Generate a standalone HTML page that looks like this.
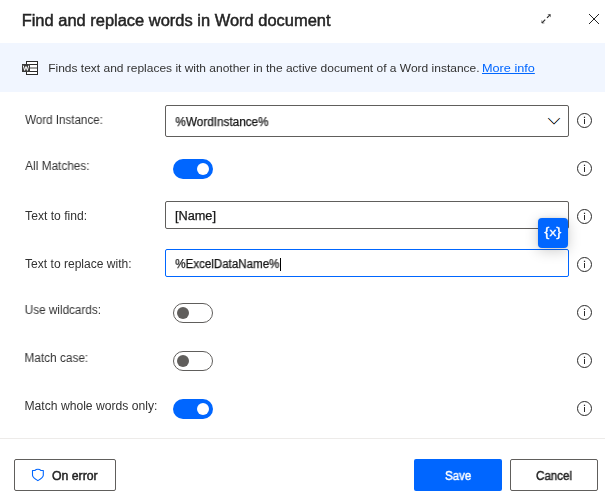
<!DOCTYPE html>
<html><head><meta charset="utf-8">
<style>
*{box-sizing:border-box;margin:0;padding:0}
html,body{width:605px;height:500px;background:#fff;overflow:hidden}
body{font-family:"Liberation Sans",sans-serif;color:#242424;position:relative}
.abs{position:absolute}
.t{position:absolute;height:0;line-height:0;white-space:nowrap;will-change:transform}
.t span{display:inline-block;line-height:0;vertical-align:baseline;transform-origin:0 50%}
.banner{left:0;top:43px;width:605px;height:49px;background:#f1f6ff}
.inp{left:165px;width:404px;border:1px solid #605e5c;border-radius:2px;background:#fff}
.tog{left:173px;width:40px;height:20px;border-radius:10px}
.tog.on{background:#0066ff}
.tog.on i{position:absolute;left:24px;top:4px;width:12px;height:12px;border-radius:6px;background:#fff}
.tog.off{border:1px solid #605e5c;background:#fff}
.tog.off i{position:absolute;left:3px;top:3px;width:12px;height:12px;border-radius:6px;background:#605e5c}
.btn{top:459px;height:32px;border-radius:2px}
svg{position:absolute;overflow:visible}
</style></head><body>
<div class="abs banner"></div>

<div class="abs inp" style="top:105px;height:32px"></div>
<div class="abs tog on" style="top:159px"><i></i></div>
<div class="abs inp" style="top:201px;height:28px"></div>
<div class="abs inp" style="top:249px;height:28px;border-color:#0066ff"></div>
<div class="abs tog off" style="top:303px"><i></i></div>
<div class="abs tog off" style="top:351px"><i></i></div>
<div class="abs tog on" style="top:399px"><i></i></div>

<div class="abs" style="left:538px;top:218px;width:30px;height:30px;border-radius:4px;background:#0066ff;box-shadow:0 3px 14px rgba(0,0,0,.2),0 0 3px rgba(0,0,0,.12)"></div>

<div class="abs" style="left:0;top:438px;width:605px;height:1px;background:#edebe9"></div>
<div class="abs btn" style="left:14px;width:102px;border:1px solid #605e5c"></div>
<div class="abs btn" style="left:414px;width:88px;background:#0066ff"></div>
<div class="abs btn" style="left:510px;width:88px;border:1px solid #605e5c"></div>

<!-- word icon -->
<svg style="left:21px;top:60px" width="18" height="16" viewBox="21 60 18 16">
 <rect x="26.5" y="61.5" width="11" height="13" fill="#fff" stroke="#2b2b2b" stroke-width="1"/>
 <line x1="27" y1="64.5" x2="37" y2="64.5" stroke="#2b2b2b" stroke-width="1"/>
 <line x1="29" y1="68" x2="37" y2="68" stroke="#8a8a8a" stroke-width="1.6"/>
 <line x1="27" y1="71.5" x2="37" y2="71.5" stroke="#2b2b2b" stroke-width="1"/>
 <rect x="22" y="64" width="8" height="8" fill="#3a3a3a"/>
 <path d="M23.3 65.6 L24.6 70.4 L26 66.4 L27.4 70.4 L28.7 65.6" fill="none" stroke="#fff" stroke-width="1"/>
</svg>
<!-- expand -->
<svg style="left:540px;top:13px" width="12" height="12" viewBox="540 13 12 12">
 <g fill="none" stroke="#2a2a2a" stroke-width="1">
 <path d="M547.8 14.5 H550.4 V17.1" opacity=".55"/><path d="M550.2 14.7 L547 17.9" stroke-width="1.2"/>
 <path d="M544.4 23 H541.8 V20.4" opacity=".55"/><path d="M542 22.8 L545.2 19.6" stroke-width="1.2"/>
 </g>
</svg>
<!-- close -->
<svg style="left:588px;top:13px" width="12" height="12" viewBox="588 13 12 12">
 <path d="M589 14 L599 24 M599 14 L589 24" fill="none" stroke="#242424" stroke-width="1"/>
</svg>
<!-- chevron -->
<svg style="left:547px;top:116px" width="14" height="10" viewBox="547 116 14 10">
 <path d="M548.3 118.2 L554 124 L559.7 118.2" fill="none" stroke="#ffc27a" stroke-width="1.1" transform="translate(-0.45,0)"/>
 <path d="M548.3 118.2 L554 124 L559.7 118.2" fill="none" stroke="#7ccbff" stroke-width="1.1" transform="translate(0.45,0)"/>
 <path d="M548.3 118.2 L554 124 L559.7 118.2" fill="none" stroke="#33202c" stroke-width="0.95"/>
</svg>
<!-- caret -->
<div class="abs" style="left:280px;top:258px;width:1px;height:13px;background:#000"></div>
<!-- shield -->
<svg style="left:31px;top:468px" width="14" height="14" viewBox="31 468 14 14">
 <path d="M32.5 470.5 L35 470.45 Q36 469.25 37.9 469.25 Q39.8 469.25 40.8 470.45 L43.3 470.5 V475.2 C43.3 477.3 41.2 478.6 37.9 480.6 C34.6 478.6 32.5 477.3 32.5 475.2 Z" fill="none" stroke="#0066ff" stroke-width="1.1" stroke-linejoin="round"/>
</svg>
<svg style="left:575px;top:111px" width="19" height="19" viewBox="0 0 19 19"><circle cx="9.5" cy="9.5" r="7" fill="none" stroke="#2a2a2a" stroke-width="1"/><rect x="9" y="8" width="1" height="5" fill="#2a2a2a"/><rect x="8.9" y="5.7" width="1.2" height="1.3" fill="#2a2a2a"/></svg>
<svg style="left:575px;top:159px" width="19" height="19" viewBox="0 0 19 19"><circle cx="9.5" cy="9.5" r="7" fill="none" stroke="#2a2a2a" stroke-width="1"/><rect x="9" y="8" width="1" height="5" fill="#2a2a2a"/><rect x="8.9" y="5.7" width="1.2" height="1.3" fill="#2a2a2a"/></svg>
<svg style="left:575px;top:207px" width="19" height="19" viewBox="0 0 19 19"><circle cx="9.5" cy="9.5" r="7" fill="none" stroke="#2a2a2a" stroke-width="1"/><rect x="9" y="8" width="1" height="5" fill="#2a2a2a"/><rect x="8.9" y="5.7" width="1.2" height="1.3" fill="#2a2a2a"/></svg>
<svg style="left:575px;top:255px" width="19" height="19" viewBox="0 0 19 19"><circle cx="9.5" cy="9.5" r="7" fill="none" stroke="#2a2a2a" stroke-width="1"/><rect x="9" y="8" width="1" height="5" fill="#2a2a2a"/><rect x="8.9" y="5.7" width="1.2" height="1.3" fill="#2a2a2a"/></svg>
<svg style="left:575px;top:303px" width="19" height="19" viewBox="0 0 19 19"><circle cx="9.5" cy="9.5" r="7" fill="none" stroke="#2a2a2a" stroke-width="1"/><rect x="9" y="8" width="1" height="5" fill="#2a2a2a"/><rect x="8.9" y="5.7" width="1.2" height="1.3" fill="#2a2a2a"/></svg>
<svg style="left:575px;top:351px" width="19" height="19" viewBox="0 0 19 19"><circle cx="9.5" cy="9.5" r="7" fill="none" stroke="#2a2a2a" stroke-width="1"/><rect x="9" y="8" width="1" height="5" fill="#2a2a2a"/><rect x="8.9" y="5.7" width="1.2" height="1.3" fill="#2a2a2a"/></svg>
<svg style="left:575px;top:399px" width="19" height="19" viewBox="0 0 19 19"><circle cx="9.5" cy="9.5" r="7" fill="none" stroke="#2a2a2a" stroke-width="1"/><rect x="9" y="8" width="1" height="5" fill="#2a2a2a"/><rect x="8.9" y="5.7" width="1.2" height="1.3" fill="#2a2a2a"/></svg>
<div class="t" id="title" style="left:21px;top:21px;font-size:15.6px;font-weight:normal;color:#242424;-webkit-text-stroke:0.45px #242424"><span style="transform:translate(0.65px,0.00px) scaleX(1.0554)">Find and replace words in Word document</span></div>
<div class="t" id="banner" style="left:48px;top:68px;font-size:11.8px;font-weight:normal;color:#323232"><span style="transform:translate(0.20px,0.00px) scaleX(1.0156)">Finds text and replaces it with another in the active document of a Word instance.</span></div>
<div class="t" id="link" style="left:482px;top:68px;font-size:11.8px;font-weight:normal;color:#0066ff"><span style="transform:translate(0.00px,0.00px) scaleX(1.0743)"><u>More info</u></span></div>
<div class="t" id="l1" style="left:25px;top:120px;font-size:12px;font-weight:normal;color:#323232"><span style="transform:translate(0.15px,0.00px) scaleX(0.9648)">Word Instance:</span></div>
<div class="t" id="l2" style="left:25px;top:166px;font-size:12px;font-weight:normal;color:#323232"><span style="transform:translate(0.15px,0.00px) scaleX(0.9862)">All Matches:</span></div>
<div class="t" id="l3" style="left:25px;top:216px;font-size:12px;font-weight:normal;color:#323232"><span style="transform:translate(0.10px,0.00px) scaleX(1.0097)">Text to find:</span></div>
<div class="t" id="l4" style="left:25px;top:264px;font-size:12px;font-weight:normal;color:#323232"><span style="transform:translate(0.10px,0.00px) scaleX(1.0038)">Text to replace with:</span></div>
<div class="t" id="l5" style="left:24px;top:310px;font-size:12px;font-weight:normal;color:#323232"><span style="transform:translate(0.70px,0.00px) scaleX(0.9778)">Use wildcards:</span></div>
<div class="t" id="l6" style="left:24px;top:358px;font-size:12px;font-weight:normal;color:#323232"><span style="transform:translate(0.45px,0.00px) scaleX(0.9851)">Match case:</span></div>
<div class="t" id="l7" style="left:24px;top:406px;font-size:12px;font-weight:normal;color:#323232"><span style="transform:translate(0.45px,0.00px) scaleX(1.0119)">Match whole words only:</span></div>
<div class="t" id="v1" style="left:175px;top:122px;font-size:12px;font-weight:normal;color:#161616;-webkit-text-stroke:0.25px #161616"><span style="transform:translate(0.40px,0.00px) scaleX(0.9785)">%WordInstance%</span></div>
<div class="t" id="v2" style="left:174px;top:216px;font-size:12px;font-weight:normal;color:#161616;-webkit-text-stroke:0.25px #161616"><span style="transform:translate(0.90px,0.00px) scaleX(1.0617)">[Name]</span></div>
<div class="t" id="v3" style="left:175px;top:264px;font-size:12px;font-weight:normal;color:#161616;-webkit-text-stroke:0.25px #161616"><span style="transform:translate(0.25px,0.00px) scaleX(0.9639)">%ExcelDataName%</span></div>
<div class="t" id="b1" style="left:51px;top:476px;font-size:12px;font-weight:normal;color:#242424;-webkit-text-stroke:0.45px #242424"><span style="transform:translate(0.95px,0.00px) scaleX(1.0233)">On error</span></div>
<div class="t" id="b2" style="left:445px;top:476px;font-size:12px;font-weight:normal;color:#ffffff;-webkit-text-stroke:0.45px #ffffff"><span style="transform:translate(0.05px,0.00px) scaleX(0.9546)">Save</span></div>
<div class="t" id="b3" style="left:536px;top:476px;font-size:12px;font-weight:normal;color:#242424;-webkit-text-stroke:0.45px #242424"><span style="transform:translate(0.05px,0.00px) scaleX(0.9619)">Cancel</span></div>
<div class="t" id="vx" style="left:544px;top:231px;font-size:13px;font-weight:normal;color:#ffffff;-webkit-text-stroke:0.3px #ffffff"><span style="transform:translate(0.35px,0.50px) scaleX(1.1674)">{<span style="font-size:.9em">x</span>}</span></div>
</body></html>
